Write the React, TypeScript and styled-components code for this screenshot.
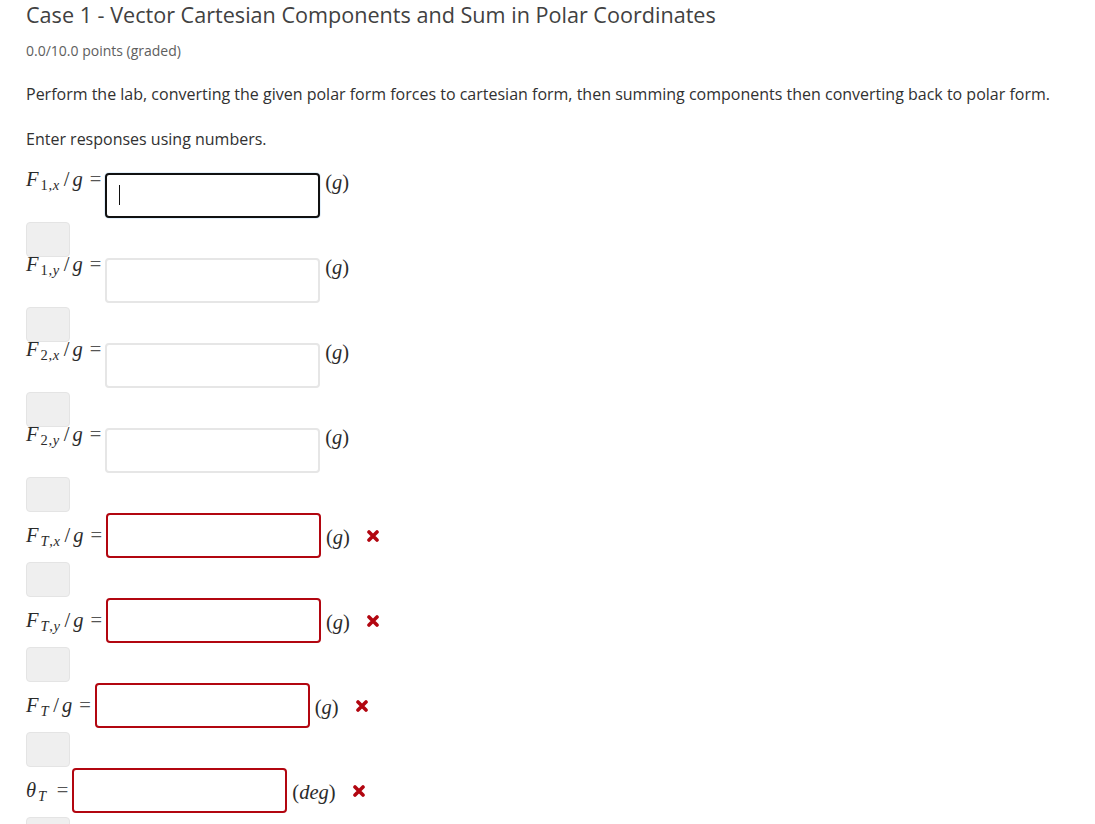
import React from "react";
import styled, { createGlobalStyle } from "styled-components";

const Global = createGlobalStyle`
  html, body { margin: 0; padding: 0; background: #ffffff; }
  body { font-family: "Open Sans", "Noto Sans", sans-serif; color: #313131; }
`;

const Page = styled.div`
  padding: 0 26px;
`;

const Title = styled.h3`
  margin: 0;
  padding-top: 1px;
  font-size: 21.6px;
  line-height: 28px;
  font-weight: 400;
  color: #414141;
`;

const Points = styled.div`
  margin-top: 12px;
  font-size: 14px;
  line-height: 20px;
  color: #5e5e5e;
`;

const Para = styled.p`
  margin: 21px 0 0;
  font-size: 16px;
  line-height: 24px;
  color: #313131;
`;

const Rows = styled.div`
  margin-top: 22px;
  display: flex;
  flex-direction: column;
`;

const Row = styled.div`
  display: flex;
  flex-direction: column;
  align-items: flex-start;
`;

const Line = styled.div<{ $raised: boolean }>`
  display: flex;
  align-items: ${(p) => (p.$raised ? "flex-start" : "center")};
  height: 45px;
`;

const MathLabel = styled.span<{ $raised: boolean }>`
  font-family: "Liberation Serif", "DejaVu Serif", serif;
  font-size: 20.5px;
  line-height: ${(p) => (p.$raised ? "13px" : "24px")};
  color: #2b2b2b;
  white-space: nowrap;
  display: inline-flex;
  align-items: baseline;
  padding-top: ${(p) => (p.$raised ? "0" : "1px")};
`;

const Var = styled.span`
  font-style: italic;
`;

const Sub = styled.span`
  font-size: 14.5px;
  position: relative;
  top: 4px;
  margin-left: 2px;
  letter-spacing: 0.6px;
`;

const SubVar = styled.span`
  font-style: italic;
`;

const Slash = styled.span`
  margin: 0 3px 0 4px;
`;

const Eq = styled.span<{ $wide?: boolean }>`
  margin-left: ${(p) => (p.$wide ? "10px" : "7px")};
  color: #555;
`;

const FieldWrap = styled.span`
  position: relative;
  display: inline-block;
  margin-left: 4px;
`;

type FieldState = "focused" | "neutral" | "wrong";

const Field = styled.input<{ $state: FieldState }>`
  box-sizing: border-box;
  width: 215px;
  height: 45px;
  margin: 0;
  padding: 0 10px;
  border-radius: 4px;
  font-family: "Open Sans", sans-serif;
  font-size: 15px;
  background: #fff;
  outline: none;
  border: 2px solid
    ${(p) =>
      p.$state === "focused" ? "#111111" : p.$state === "wrong" ? "#b20610" : "#e6e6e6"};
  box-shadow: ${(p) =>
    p.$state === "focused" ? "0 0 0 1px #e3f0fb" : "none"};
`;

const Caret = styled.span`
  position: absolute;
  left: 14px;
  top: 12px;
  width: 1px;
  height: 20px;
  background: #111;
`;

const Unit = styled.span<{ $raised: boolean }>`
  font-family: "Liberation Serif", "DejaVu Serif", serif;
  font-size: 20.5px;
  line-height: ${(p) => (p.$raised ? "16px" : "24px")};
  padding-top: ${(p) => (p.$raised ? "1px" : "2px")};
  color: #2b2b2b;
  margin-left: 5px;
  white-space: nowrap;
`;

const WrongMark = styled.svg`
  margin-left: 17px;
  width: 12px;
  height: 12px;
  flex: none;
`;

const StatusBox = styled.div`
  box-sizing: border-box;
  width: 44px;
  height: 35px;
  margin: 4px 0 1px;
  background: #efefef;
  border: 1px solid #e4e4e4;
  border-radius: 4px;
`;

type RowData = {
  main: string;
  sub: [string, string];
  slashG: boolean;
  unit: string;
  state: FieldState;
};

const rows: RowData[] = [
  { main: "F", sub: ["1", "x"], slashG: true, unit: "g", state: "focused" },
  { main: "F", sub: ["1", "y"], slashG: true, unit: "g", state: "neutral" },
  { main: "F", sub: ["2", "x"], slashG: true, unit: "g", state: "neutral" },
  { main: "F", sub: ["2", "y"], slashG: true, unit: "g", state: "neutral" },
  { main: "F", sub: ["T", "x"], slashG: true, unit: "g", state: "wrong" },
  { main: "F", sub: ["T", "y"], slashG: true, unit: "g", state: "wrong" },
  { main: "F", sub: ["T", ""], slashG: true, unit: "g", state: "wrong" },
  { main: "θ", sub: ["T", ""], slashG: false, unit: "deg", state: "wrong" },
];

function Label({ r, raised }: { r: RowData; raised: boolean }) {
  const [a, b] = r.sub;
  return (
    <MathLabel $raised={raised}>
      <Var>{r.main}</Var>
      <Sub>
        {a === "T" ? <SubVar>{a}</SubVar> : a}
        {b && (
          <>
            ,<SubVar>{b}</SubVar>
          </>
        )}
      </Sub>
      {r.slashG && (
        <>
          <Slash>/</Slash>
          <Var>g</Var>
        </>
      )}
      <Eq $wide={!r.slashG}>=</Eq>
    </MathLabel>
  );
}

function Cross() {
  return (
    <WrongMark viewBox="0 0 12 12" aria-label="incorrect">
      <path
        d="M2 2 L10 10 M10 2 L2 10"
        stroke="#b20610"
        strokeWidth="3.6"
        strokeLinecap="round"
        fill="none"
      />
    </WrongMark>
  );
}

export default function App() {
  return (
    <>
      <Global />
      <Page>
        <Title>Case 1 - Vector Cartesian Components and Sum in Polar Coordinates</Title>
        <Points>0.0/10.0 points (graded)</Points>
        <Para>
          Perform the lab, converting the given polar form forces to cartesian form, then
          summing components then converting back to polar form.
        </Para>
        <Para>Enter responses using numbers.</Para>
        <Rows>
          {rows.map((r, i) => {
            const raised = r.state !== "wrong";
            return (
              <Row key={i}>
                <Line $raised={raised}>
                  <Label r={r} raised={raised} />
                  <FieldWrap>
                    <Field $state={r.state} type="text" aria-label="answer" />
                    {r.state === "focused" && <Caret />}
                  </FieldWrap>
                  <Unit $raised={raised}>
                    (<Var>{r.unit}</Var>)
                  </Unit>
                  {r.state === "wrong" && <Cross />}
                </Line>
                <StatusBox />
              </Row>
            );
          })}
        </Rows>
      </Page>
    </>
  );
}
